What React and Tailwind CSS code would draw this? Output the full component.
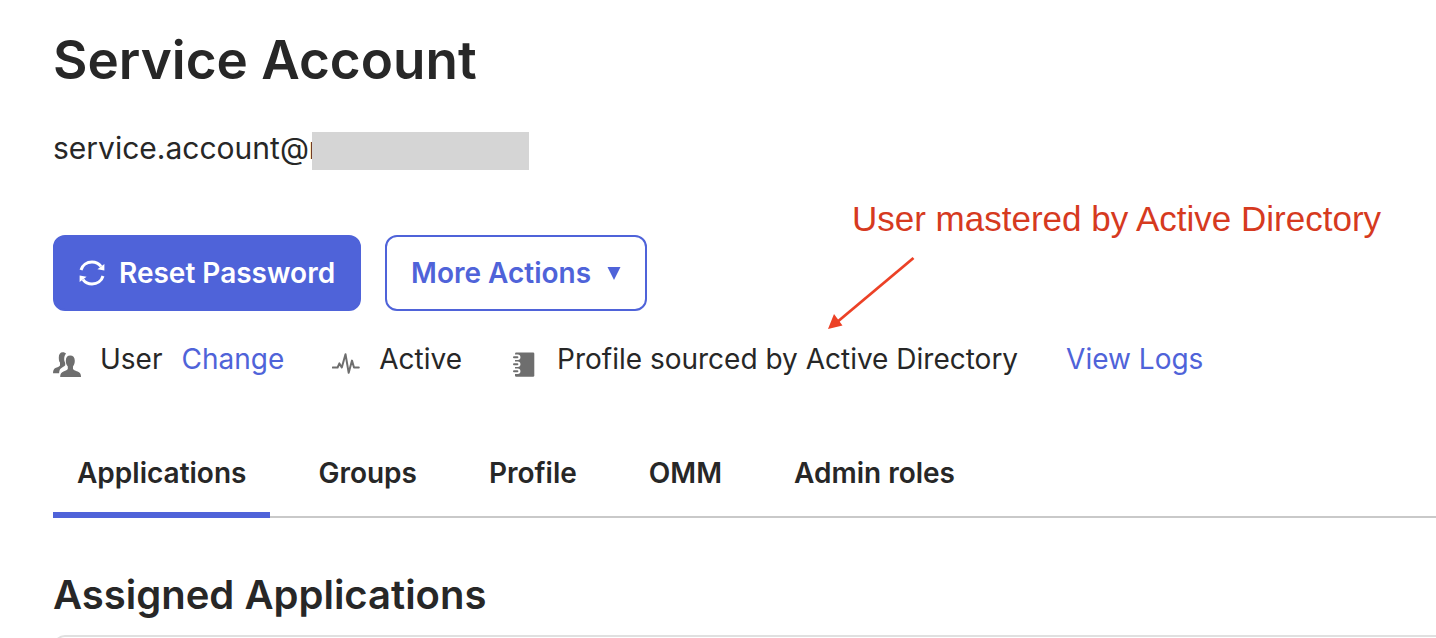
import React, { useState } from "react";

const tabs = ["Applications", "Groups", "Profile", "OMM", "Admin roles"];

function ResetIcon() {
  return (
    <svg width="26" height="26" viewBox="0 0 26 26" fill="none" aria-hidden="true">
      <path d="M2 10C3.4 5 7.8 2 13 2C16.6 2 19.8 3.5 22 6.4" stroke="currentColor" strokeWidth="3" />
      <path d="M24 16C22.6 21 18.2 24 13 24C9.4 24 6.2 22.5 4 19.6" stroke="currentColor" strokeWidth="3" />
      <path d="M25.4 4V10.6L18.4 9.2Z" fill="currentColor" />
      <path d="M0.6 22V15.4L7.6 16.8Z" fill="currentColor" />
    </svg>
  );
}

function UsersIcon() {
  return (
    <svg width="28" height="26" viewBox="0 0 28 26" fill="#6e6e6e" aria-hidden="true">
      <path d="M9.8 0.2C11.2 0.2 12.4 0.7 13 1.7C11.7 3 11.3 4.7 11.2 6.6C11.1 8.3 11.4 9.5 12.2 10.9V13.2C11.2 14.6 8.8 15.2 7.2 17C6.4 18.2 6.3 19.6 6.1 21.2H0C0.1 18.5 0.7 17 2.4 16.1C4.2 15.2 6.4 14.7 7 13.4V10.6C6.1 9.4 5.8 7.7 5.8 5.4C5.8 2.2 7.2 0.2 9.8 0.2Z" />
      <path d="M17.2 3.6C20 3.6 21.8 5.4 21.8 8.7C21.8 11.2 21.1 13.1 20 14.4V17.1C20.8 18.8 24.5 19.2 26.3 20.6C27.5 21.6 28 23 28 25H7.2C7.2 23 7.7 21.6 8.9 20.6C10.7 19.2 14.1 18.8 14.8 17.1V14.4C13.5 13.1 12.8 11.2 12.8 8.7C12.8 5.4 14.5 3.6 17.2 3.6Z" />
    </svg>
  );
}

function PulseIcon() {
  return (
    <svg width="28" height="26" viewBox="0 0 28 26" fill="none" aria-hidden="true">
      <path
        d="M0.8 15.5H5.6L7.4 11.4L9.8 15.5L13.5 2.2L16.7 20.8L20 8.6L22 15.5H26.8"
        stroke="#6e6e6e"
        strokeWidth="2"
        strokeLinecap="round"
        strokeLinejoin="round"
      />
    </svg>
  );
}

function NotebookIcon() {
  return (
    <svg width="24" height="26" viewBox="0 0 24 26" aria-hidden="true">
      <rect x="3" y="0.5" width="19.3" height="24.3" rx="1.2" fill="#6e6e6e" />
      {[5.5, 12.5, 19.5].map((y) => (
        <g key={y}>
          <rect x="0" y={y - 3} width="8.4" height="5.4" rx="2.6" fill="#fff" />
          <rect x="1" y={y - 1.2} width="5.4" height="2" rx="1" fill="#6e6e6e" />
        </g>
      ))}
    </svg>
  );
}

function StatusItem({ icon, children }) {
  return (
    <li className="flex items-center gap-[19px]">
      <span className="flex w-7 justify-center pt-3">{icon}</span>
      {children}
    </li>
  );
}

function Annotation() {
  return (
    <div className="absolute top-[198px] left-[828px] text-[#d63a1f]">
      <p className="pl-6 font-['Liberation_Sans',Arial,sans-serif] text-[35px] leading-[42px] whitespace-nowrap">
        User mastered by Active Directory
      </p>
      <svg className="mt-4" width="90" height="76" viewBox="0 0 90 76" aria-hidden="true">
        <path d="M85.5 2L8 67" stroke="#ec4126" strokeWidth="2.8" />
        <path d="M0 73L6 58L14.5 69.5Z" fill="#ec4126" />
      </svg>
    </div>
  );
}

export default function App() {
  const [activeTab, setActiveTab] = useState("Applications");

  return (
    <main className="relative flex h-screen flex-col overflow-hidden bg-white pt-7 pl-[53px] font-[Inter,sans-serif] text-[28px] leading-10 text-[#272727]">
      <h1 className="text-[53px] leading-[64px] font-semibold">Service Account</h1>

      <div className="mt-10 flex items-start">
        <p className="text-[30px] leading-8">service.account@r</p>
        <span className="relative -ml-2 h-[38px] w-[217px] bg-[#d5d5d5]" />
      </div>

      <div className="mt-[65px] flex gap-6 font-semibold">
        <button
          type="button"
          className="flex items-center gap-3.5 rounded-xl border-2 border-[#4f63d9] bg-[#4f63d9] px-6 py-4 text-white"
        >
          <ResetIcon />
          Reset Password
        </button>
        <button
          type="button"
          className="flex items-center gap-4 rounded-xl border-2 border-[#4f63d9] bg-white px-6 py-4 text-[#4f63d9]"
        >
          More Actions
          <svg width="14" height="14" viewBox="0 0 14 14" fill="currentColor" aria-hidden="true">
            <path d="M0.5 1H13.5L7 14Z" />
          </svg>
        </button>
      </div>

      <ul className="mt-7 flex gap-12 whitespace-nowrap">
        <StatusItem icon={<UsersIcon />}>
          <span>User</span>
          <a href="#change" className="text-[#4f63d9]">
            Change
          </a>
        </StatusItem>
        <StatusItem icon={<PulseIcon />}>
          <span>Active</span>
        </StatusItem>
        <StatusItem icon={<NotebookIcon />}>
          <span>Profile sourced by Active Directory</span>
        </StatusItem>
        <li>
          <a href="#logs" className="text-[#4f63d9]">
            View Logs
          </a>
        </li>
      </ul>

      <nav className="mt-[74px] flex gap-6 border-b-2 border-[#c9c9c9] font-semibold">
        {tabs.map((tab) => (
          <button
            key={tab}
            type="button"
            onClick={() => setActiveTab(tab)}
            className={`-mb-0.5 border-b-6 px-6 pb-[19px] ${
              tab === activeTab ? "border-[#4f63d9]" : "border-transparent"
            }`}
          >
            {tab}
          </button>
        ))}
      </nav>

      <h2 className="mt-[53px] text-[40px] leading-[48px] font-semibold">Assigned Applications</h2>
      <section className="mt-4 h-24 shrink-0 rounded-tl-xl border-t-2 border-l-2 border-[#e0e0e0]" />

      <Annotation />
    </main>
  );
}
